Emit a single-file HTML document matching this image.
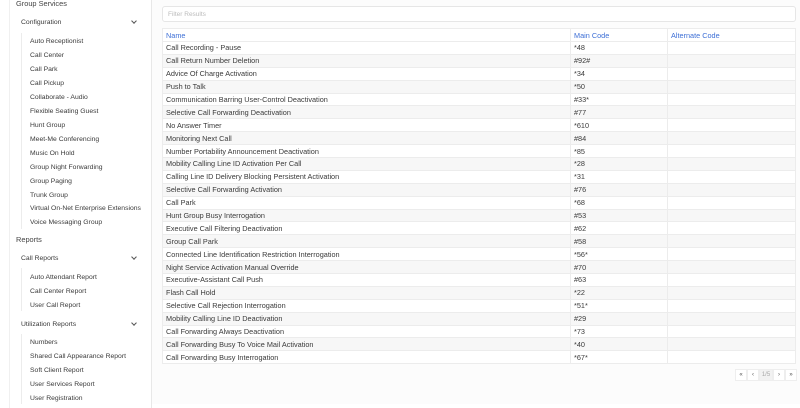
<!DOCTYPE html>
<html><head><style>
*{margin:0;padding:0;box-sizing:border-box}
body{width:800px;height:404px;overflow:hidden;background:#fff;font-family:"Liberation Sans",sans-serif;color:#333;position:relative}
.sb{position:absolute;left:9px;top:-2px;width:143px;height:410px;border-left:1px solid #f0f0f0;border-right:1px solid #e8e8e8;background:#fff}
.t{position:absolute;font-size:6.8px;white-space:nowrap;color:#3a3a3a;margin-top:1.5px}
.h{font-size:7.4px;color:#444;margin-top:0}
.vl{position:absolute;left:21px;width:1px;background:#ececec}
.chev{position:absolute;left:132px;width:4px;height:4px;border-right:1px solid #555;border-bottom:1px solid #555;transform:rotate(45deg)}
.main{position:absolute;left:152px;top:0;width:648px;height:404px;background:#fcfcfc}
.filter{position:absolute;left:162px;top:6px;width:634px;height:16px;border:1px solid #e6e6e6;border-radius:3px;background:#fff;font-size:6.5px;color:#bbb;padding:4px 5px}
table{position:absolute;left:162px;top:28px;width:634px;border-collapse:collapse;font-size:7.3px;background:#fff;color:#3a3a3a}
td,th{border:1px solid #ececec;height:12.9px;padding:0 3px;text-align:left;font-weight:normal;white-space:nowrap}
th{color:#3d6fd6;height:13px}
tr:nth-child(odd) td{background:#f7f7f7}
.pg{position:absolute;top:369px;height:12px;width:12px;border:1px solid #eee;background:#fff;font-size:6px;text-align:center;line-height:11px;color:#555}
</style></head><body>
<div class="sb"></div>
<div class="t h" style="left:16px;top:-1px">Group Services</div>
<div class="t" style="left:21px;top:17px">Configuration</div><div class="chev" style="top:19px"></div>
<div class="vl" style="top:33px;height:196px"></div>
<div class="t" style="left:30px;top:36px">Auto Receptionist</div>
<div class="t" style="left:30px;top:50px">Call Center</div>
<div class="t" style="left:30px;top:64px">Call Park</div>
<div class="t" style="left:30px;top:78px">Call Pickup</div>
<div class="t" style="left:30px;top:92px">Collaborate - Audio</div>
<div class="t" style="left:30px;top:106px">Flexible Seating Guest</div>
<div class="t" style="left:30px;top:120px">Hunt Group</div>
<div class="t" style="left:30px;top:134px">Meet-Me Conferencing</div>
<div class="t" style="left:30px;top:148px">Music On Hold</div>
<div class="t" style="left:30px;top:162px">Group Night Forwarding</div>
<div class="t" style="left:30px;top:176px">Group Paging</div>
<div class="t" style="left:30px;top:190px">Trunk Group</div>
<div class="t" style="left:30px;top:203px">Virtual On-Net Enterprise Extensions</div>
<div class="t" style="left:30px;top:217px">Voice Messaging Group</div>
<div class="t h" style="left:16px;top:235px">Reports</div>
<div class="t" style="left:21px;top:253px">Call Reports</div><div class="chev" style="top:255px"></div>
<div class="vl" style="top:268px;height:43px"></div>
<div class="t" style="left:30px;top:272px">Auto Attendant Report</div>
<div class="t" style="left:30px;top:286px">Call Center Report</div>
<div class="t" style="left:30px;top:300px">User Call Report</div>
<div class="t" style="left:21px;top:319px">Utilization Reports</div><div class="chev" style="top:321px"></div>
<div class="vl" style="top:334px;height:70px"></div>
<div class="t" style="left:30px;top:337px">Numbers</div>
<div class="t" style="left:30px;top:351px">Shared Call Appearance Report</div>
<div class="t" style="left:30px;top:365px">Soft Client Report</div>
<div class="t" style="left:30px;top:379px">User Services Report</div>
<div class="t" style="left:30px;top:393px">User Registration</div>
<div class="main"></div>
<div class="filter">Filter Results</div>
<table>
<tr><th style="width:408px">Name</th><th style="width:97px">Main Code</th><th>Alternate Code</th></tr>
<tr><td>Call Recording - Pause</td><td>*48</td><td></td></tr>
<tr><td>Call Return Number Deletion</td><td>#92#</td><td></td></tr>
<tr><td>Advice Of Charge Activation</td><td>*34</td><td></td></tr>
<tr><td>Push to Talk</td><td>*50</td><td></td></tr>
<tr><td>Communication Barring User-Control Deactivation</td><td>#33*</td><td></td></tr>
<tr><td>Selective Call Forwarding Deactivation</td><td>#77</td><td></td></tr>
<tr><td>No Answer Timer</td><td>*610</td><td></td></tr>
<tr><td>Monitoring Next Call</td><td>#84</td><td></td></tr>
<tr><td>Number Portability Announcement Deactivation</td><td>*85</td><td></td></tr>
<tr><td>Mobility Calling Line ID Activation Per Call</td><td>*28</td><td></td></tr>
<tr><td>Calling Line ID Delivery Blocking Persistent Activation</td><td>*31</td><td></td></tr>
<tr><td>Selective Call Forwarding Activation</td><td>#76</td><td></td></tr>
<tr><td>Call Park</td><td>*68</td><td></td></tr>
<tr><td>Hunt Group Busy Interrogation</td><td>#53</td><td></td></tr>
<tr><td>Executive Call Filtering Deactivation</td><td>#62</td><td></td></tr>
<tr><td>Group Call Park</td><td>#58</td><td></td></tr>
<tr><td>Connected Line Identification Restriction Interrogation</td><td>*56*</td><td></td></tr>
<tr><td>Night Service Activation Manual Override</td><td>#70</td><td></td></tr>
<tr><td>Executive-Assistant Call Push</td><td>#63</td><td></td></tr>
<tr><td>Flash Call Hold</td><td>*22</td><td></td></tr>
<tr><td>Selective Call Rejection Interrogation</td><td>*51*</td><td></td></tr>
<tr><td>Mobility Calling Line ID Deactivation</td><td>#29</td><td></td></tr>
<tr><td>Call Forwarding Always Deactivation</td><td>*73</td><td></td></tr>
<tr><td>Call Forwarding Busy To Voice Mail Activation</td><td>*40</td><td></td></tr>
<tr><td>Call Forwarding Busy Interrogation</td><td>*67*</td><td></td></tr>
</table>
<div class="pg" style="left:735px">«</div>
<div class="pg" style="left:747px">‹</div>
<div class="pg" style="left:759px;width:14px;background:#f2f2f2;color:#aaa">1/5</div>
<div class="pg" style="left:773px">›</div>
<div class="pg" style="left:785px">»</div>
</body></html>
